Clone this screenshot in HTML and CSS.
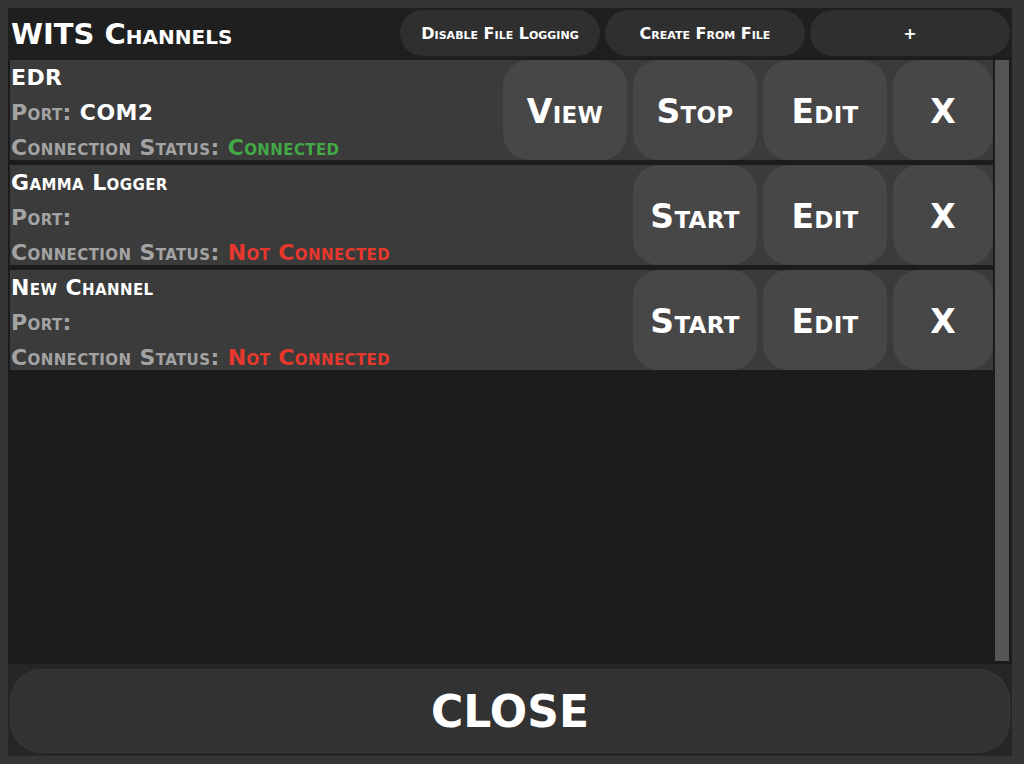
FILE: index.html
```html
<!DOCTYPE html>
<html>
<head>
<meta charset="utf-8">
<link rel="stylesheet" href="styles.css">
</head>
<body>
<div class="panel">
  <div class="header">
    <div class="title">WITS Channels</div>
    <div class="head-buttons">
      <button class="hbtn">Disable File Logging</button>
      <button class="hbtn">Create From File</button>
      <button class="hbtn">+</button>
    </div>
  </div>
  <div class="list">
    <div class="rows">
      <div class="row">
        <div class="info">
          <div class="name">EDR</div>
          <div class="line"><span class="label">Port:</span> <span class="value">COM2</span></div>
          <div class="line"><span class="label">Connection Status:</span> <span class="ok">Connected</span></div>
        </div>
        <div class="actions">
          <button class="rbtn">View</button>
          <button class="rbtn">Stop</button>
          <button class="rbtn">Edit</button>
          <button class="rbtn xbtn">X</button>
        </div>
      </div>
      <div class="row">
        <div class="info">
          <div class="name">Gamma Logger</div>
          <div class="line"><span class="label">Port:</span></div>
          <div class="line"><span class="label">Connection Status:</span> <span class="bad">Not Connected</span></div>
        </div>
        <div class="actions">
          <button class="rbtn">Start</button>
          <button class="rbtn">Edit</button>
          <button class="rbtn xbtn">X</button>
        </div>
      </div>
      <div class="row">
        <div class="info">
          <div class="name">New Channel</div>
          <div class="line"><span class="label">Port:</span></div>
          <div class="line"><span class="label">Connection Status:</span> <span class="bad">Not Connected</span></div>
        </div>
        <div class="actions">
          <button class="rbtn">Start</button>
          <button class="rbtn">Edit</button>
          <button class="rbtn xbtn">X</button>
        </div>
      </div>
    </div>
    <div class="scrollbar"><div class="thumb"></div></div>
  </div>
  <div class="footer">
    <button class="close">CLOSE</button>
  </div>
</div>
</body>
</html>
```
FILE: styles.css
```css
html, body {
  margin: 0;
  padding: 0;
  background: #353535;
  width: 1024px;
  height: 764px;
  overflow: hidden;
}
body {
  font-family: "DejaVu Sans", "Liberation Sans", sans-serif;
  font-weight: bold;
  font-variant: small-caps;
  color: #ffffff;
}
button {
  font-family: inherit;
  font-weight: bold;
  font-variant: small-caps;
  color: #ffffff;
  border: none;
  padding: 0;
  margin: 0;
  cursor: pointer;
}
.panel {
  margin: 8px 12px 8px 8px;
  width: 1004px;
  height: 748px;
  background: #232323;
  display: flex;
  flex-direction: column;
}
.header {
  height: 50px;
  background: #1f1f1f;
  display: flex;
  align-items: flex-start;
  justify-content: space-between;
}
.title {
  font-size: 29px;
  line-height: 50px;
  padding-left: 3px;
  padding-top: 1px;
}
.head-buttons {
  display: flex;
  gap: 5px;
  padding-top: 2px;
  padding-right: 2px;
}
.hbtn {
  width: 200px;
  height: 46px;
  border-radius: 23px;
  background: #2f2f2f;
  font-size: 16px;
}
.list {
  flex: 1;
  background: #1c1c1c;
  display: flex;
  gap: 2px;
  padding: 2px 3px 3px 2px;
}
.rows {
  flex: 1;
  display: flex;
  flex-direction: column;
  gap: 5px;
}
.row {
  height: 100px;
  background: #3b3b3b;
  display: flex;
  justify-content: space-between;
}
.info {
  padding-left: 1px;
  padding-top: 1px;
  font-size: 22px;
  letter-spacing: 0.4px;
}
.name {
  line-height: 34px;
  color: #ffffff;
}
.line {
  line-height: 35px;
}
.label {
  color: #a3a3a3;
}
.value {
  color: #ffffff;
}
.ok {
  color: #43a846;
}
.bad {
  color: #e8382d;
}
.actions {
  display: flex;
  gap: 6px;
}
.rbtn {
  width: 124px;
  height: 100px;
  border-radius: 26px;
  background: #474747;
  font-size: 33px;
  letter-spacing: 0.3px;
  padding-top: 2px;
}
.xbtn {
  width: 100px;
}
.scrollbar {
  width: 14px;
  background: #2a2a2a;
}
.thumb {
  height: 100%;
  background: #555555;
}
.footer {
  height: 92px;
  padding: 5px 2px 3px 2px;
  box-sizing: border-box;
  background: #262626;
}
.close {
  width: 1000px;
  height: 84px;
  border-radius: 32px;
  background: #323232;
  font-size: 44px;
  box-shadow: inset 0 0 0 1px #383838;
}
```
